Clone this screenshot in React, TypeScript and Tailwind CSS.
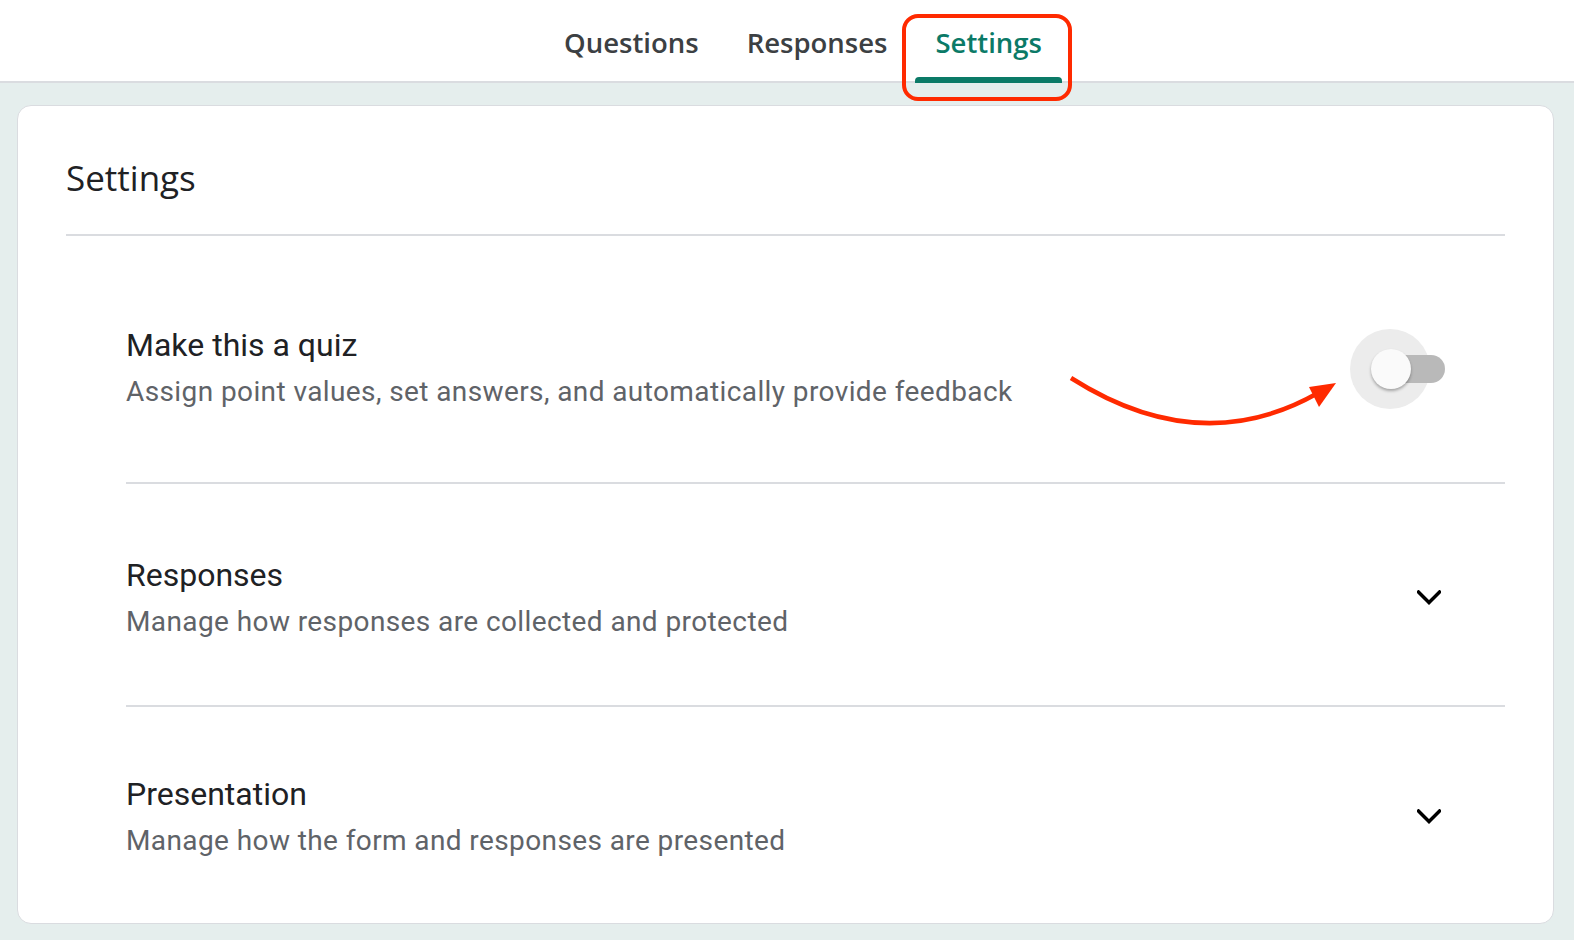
import React from 'react';

const sans = { fontFamily: '"Open Sans", Roboto, sans-serif' };
const roboto = { fontFamily: 'Roboto, "Liberation Sans", sans-serif' };

const Chevron = () => (
  <svg width="24" height="16" viewBox="0 0 24 16" fill="none">
    <path d="M1.5 2 L12 12.5 L22.5 2" stroke="#000" strokeWidth="3.4" strokeLinecap="square" />
  </svg>
);

const QuizToggle = () => (
  <div className="relative w-[95px] h-[80px]">
    <div className="absolute left-0 top-0 w-[80px] h-[80px] rounded-full bg-[#ececec]" />
    <div className="absolute left-[23px] top-[26px] w-[72px] h-[28px] rounded-full bg-[#b9b9b9]" />
    <div className="absolute left-[21px] top-[20px] w-[40px] h-[40px] rounded-full bg-[#fafafa] shadow-[0_2px_3px_rgba(0,0,0,0.3)]" />
  </div>
);

const Section = ({
  title,
  subtitle,
  right,
  className,
}: {
  title: string;
  subtitle: string;
  right: React.ReactNode;
  className: string;
}) => (
  <div className={`flex items-center justify-between ${className}`}>
    <div style={roboto}>
      <div className="text-[32px] leading-[40px] text-[#202124]">{title}</div>
      <div className="mt-[7px] text-[28px] leading-[40px] text-[#5f6368] tracking-[0.4px]">{subtitle}</div>
    </div>
    {right}
  </div>
);

export default function App() {
  const tabs = ['Questions', 'Responses', 'Settings'];

  return (
    <div className="relative w-full h-[940px] bg-[#e5eeed] overflow-hidden" style={sans}>
      {/* Top tabs */}
      <div className="h-[83px] bg-white border-b-2 border-[#dadce0] flex justify-center pl-[32px]">
        <div className="flex gap-[8px] h-full">
          {tabs.map((t) => {
            const active = t === 'Settings';
            return (
              <div key={t} className="relative h-full px-[20px] pt-[23px]">
                <span
                  className={`block text-[27.5px] leading-[40px] font-semibold ${
                    active ? 'text-[#0b7a67]' : 'text-[#3c4043]'
                  }`}
                >
                  {t}
                </span>
                {active && (
                  <>
                    <div className="absolute left-0 right-0 bottom-[-2px] h-[6px] rounded-t-[4px] bg-[#0b7a67]" />
                    <div className="absolute left-[-13px] right-[-10px] top-[14px] bottom-[-20px] rounded-[16px] border-[4px] border-[#ff2a00] z-10" />
                  </>
                )}
              </div>
            );
          })}
        </div>
      </div>

      {/* Card */}
      <div className="mt-[22px] ml-[17px] w-[1537px] bg-white border border-[#dadce0] rounded-[14px] px-[48px]">
        <div className="pt-[49px] pb-[33px] border-b-2 border-[#dadce0]">
          <h1 className="text-[35px] leading-[46px] text-[#202124]">Settings</h1>
        </div>

        <div className="pl-[60px]">
          <Section
            className="pt-[89px] pb-[70px] border-b-2 border-[#dadce0]"
            title="Make this a quiz"
            subtitle="Assign point values, set answers, and automatically provide feedback"
            right={
              <div className="mr-[60px]">
                <QuizToggle />
              </div>
            }
          />
          <Section
            className="pt-[71px] pb-[63px] border-b-2 border-[#dadce0]"
            title="Responses"
            subtitle="Manage how responses are collected and protected"
            right={
              <div className="mr-[64px] mb-[2px]">
                <Chevron />
              </div>
            }
          />
          <Section
            className="pt-[67px] pb-[62px]"
            title="Presentation"
            subtitle="Manage how the form and responses are presented"
            right={
              <div className="mr-[64px] mb-[2px]">
                <Chevron />
              </div>
            }
          />
        </div>
      </div>

      {/* Annotation arrow */}
      <svg className="absolute left-0 top-0 pointer-events-none" width="1574" height="940">
        <path d="M1071 378 Q1200 460 1318 393" stroke="#ff2a00" strokeWidth="4.5" fill="none" />
        <polygon points="1309,387 1336,383 1319,407" fill="#ff2a00" />
      </svg>
    </div>
  );
}
